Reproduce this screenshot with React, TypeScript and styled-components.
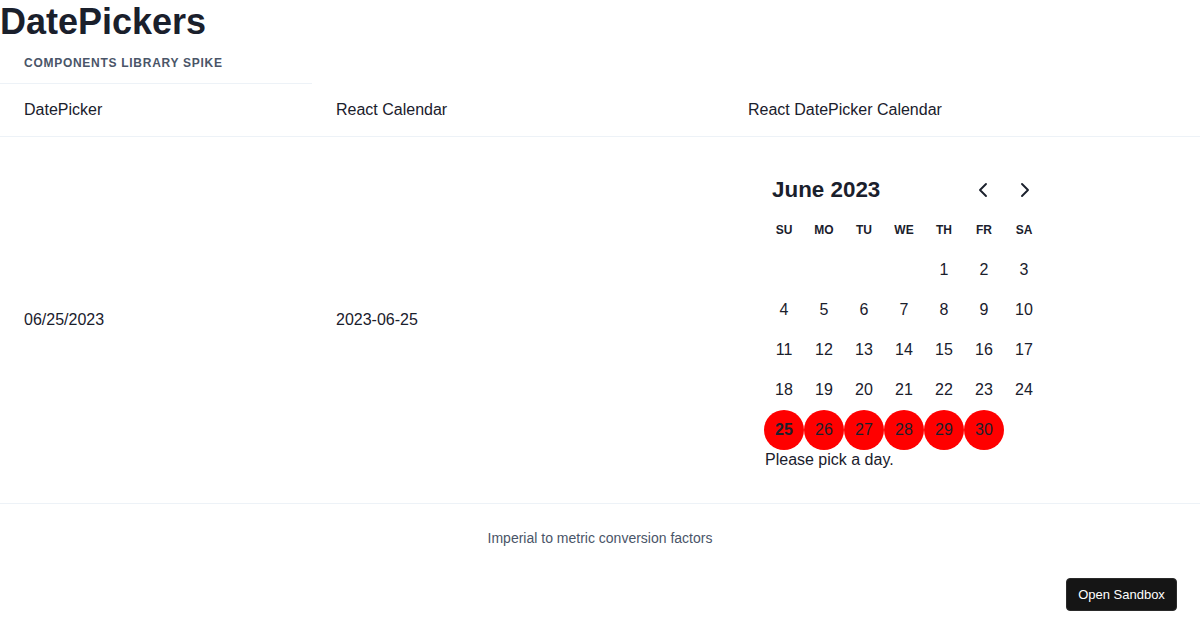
import styled, { createGlobalStyle } from "styled-components";

const GlobalStyle = createGlobalStyle`
    html, body {
        margin: 0;
        padding: 0;
        background: #ffffff;
        font-family: "Liberation Sans", Arial, sans-serif;
        color: #1A202C;
    }
`;

const Title = styled.h2`
    margin: 0;
    font-size: 36px;
    line-height: 43px;
    font-weight: 700;
    color: #1A202C;
`;

const Table = styled.table`
    width: 1200px;
    border-collapse: collapse;
    table-layout: fixed;
    font-variant-numeric: lining-nums tabular-nums;
`;

const Th = styled.th`
    text-align: left;
    padding: 12px 24px;
    font-size: 12px;
    line-height: 16px;
    font-weight: 700;
    letter-spacing: 0.72px;
    text-transform: uppercase;
    color: #4A5568;
    border-bottom: 1px solid #EDF2F7;
`;

const Td = styled.td<{ $tall?: boolean }>`
    padding: ${(p) => (p.$tall ? "17px 24px" : "16px 24px")};
    font-size: 16px;
    line-height: 20px;
    text-align: left;
    vertical-align: middle;
    border-bottom: 1px solid #EDF2F7;
`;

const Caption = styled.caption`
    caption-side: bottom;
    margin-top: 16px;
    padding: 8px 24px;
    font-size: 14px;
    line-height: 20px;
    font-weight: 500;
    text-align: center;
    color: #4A5568;
`;

const Calendar = styled.div`
    margin: 16px;
    width: 280px;
`;

const CalHeader = styled.div`
    display: flex;
    align-items: center;
    justify-content: space-between;
    height: 40px;
`;

const MonthLabel = styled.div`
    font-size: 22.4px;
    font-weight: 700;
    padding: 0 8px;
`;

const Nav = styled.div`
    display: flex;
`;

const NavButton = styled.button`
    width: 40px;
    height: 40px;
    border: none;
    background: transparent;
    padding: 0;
    display: flex;
    align-items: center;
    justify-content: center;
    color: #1A202C;
`;

const Grid = styled.div`
    display: grid;
    grid-template-columns: repeat(7, 40px);
    grid-auto-rows: 40px;
`;

const HeadCell = styled.div`
    display: flex;
    align-items: center;
    justify-content: center;
    font-size: 12px;
    font-weight: 700;
    text-transform: uppercase;
`;

const Day = styled.div<{ $selected?: boolean; $today?: boolean }>`
    display: flex;
    align-items: center;
    justify-content: center;
    font-size: 16px;
    border-radius: 50%;
    background: ${(p) => (p.$selected ? "#ff0000" : "transparent")};
    font-weight: ${(p) => (p.$today ? 700 : 400)};
`;

const Footer = styled.div`
    padding-left: 1px;
    font-size: 16px;
    line-height: 20px;
`;

const SandboxButton = styled.button`
    position: fixed;
    right: 23px;
    bottom: 19px;
    width: 111px;
    height: 33px;
    border: 1px solid #2a2a2a;
    border-radius: 4px;
    background: #151515;
    color: #ffffff;
    font-family: "Liberation Sans", Arial, sans-serif;
    font-size: 13px;
`;

const weekdays = ["Su", "Mo", "Tu", "We", "Th", "Fr", "Sa"];

function Chevron({ dir }: { dir: "left" | "right" }) {
    const pts = dir === "left" ? "10,2 4,8 10,14" : "6,2 12,8 6,14";
    return (
        <svg width="16" height="16" viewBox="0 0 16 16">
            <polyline points={pts} fill="none" stroke="currentColor" strokeWidth="1.9" strokeLinecap="round" strokeLinejoin="round" />
        </svg>
    );
}

function DayPicker() {
    const cells: (number | null)[] = [null, null, null, null];
    for (let d = 1; d <= 30; d++) cells.push(d);
    return (
        <Calendar>
            <CalHeader>
                <MonthLabel>June 2023</MonthLabel>
                <Nav>
                    <NavButton><Chevron dir="left" /></NavButton>
                    <NavButton><Chevron dir="right" /></NavButton>
                </Nav>
            </CalHeader>
            <Grid>
                {weekdays.map((w) => <HeadCell key={w}>{w}</HeadCell>)}
                {cells.map((d, i) =>
                    <Day key={i} $selected={d !== null && d >= 25} $today={d === 25}>{d ?? ""}</Day>
                )}
            </Grid>
            <Footer>Please pick a day.</Footer>
        </Calendar>
    );
}

function App() {
    return <>
        <GlobalStyle />
        <Title>DatePickers</Title>
        <Table>
            <colgroup>
                <col style={{ width: 312 }} />
                <col style={{ width: 412 }} />
                <col style={{ width: 476 }} />
            </colgroup>
            <Caption>Imperial to metric conversion factors</Caption>
            <thead>
                <tr>
                    <Th>Components Library Spike</Th>
                </tr>
            </thead>
            <tbody>
                <tr>
                    <Td>DatePicker</Td>
                    <Td>React Calendar</Td>
                    <Td>React DatePicker Calendar</Td>
                </tr>
                <tr>
                    <Td>06/25/2023</Td>
                    <Td>2023-06-25</Td>
                    <Td $tall><DayPicker /></Td>
                </tr>
            </tbody>
        </Table>
        <SandboxButton>Open Sandbox</SandboxButton>
    </>
}

export default App;
